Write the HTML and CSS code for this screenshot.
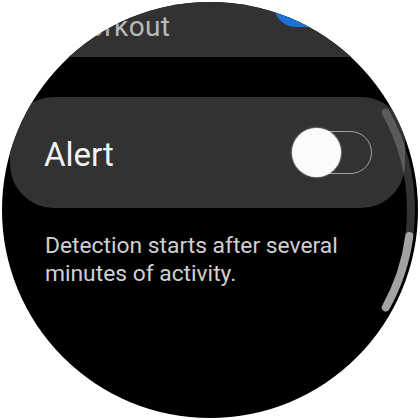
FILE: index.html
```html
<!DOCTYPE html>
<html lang="en">
<head>
<meta charset="utf-8">
<title>Alert</title>
<link rel="stylesheet" href="styles.css">
</head>
<body>
  <div class="watch">
    <div class="list">
      <div class="card card-workout">
        <span class="sub-label">Workout</span>
        <span class="switch switch-on"></span>
      </div>
      <div class="card card-alert">
        <span class="label">Alert</span>
        <span class="switch">
          <span class="knob"></span>
        </span>
      </div>
      <p class="desc">Detection starts after several minutes of activity.</p>
    </div>
    <svg class="scrollbar" width="416" height="416" viewBox="0 0 416 416" aria-hidden="true">
      <path class="scroll-track" d="M383.8 110.6 A201 201 0 0 1 383.8 305.4"/>
      <path class="scroll-thumb" d="M407.3 234 A201 201 0 0 1 383.8 305.4"/>
    </svg>
  </div>
</body>
</html>
```
FILE: styles.css
```css
html, body {
  margin: 0;
  padding: 0;
  background: #ffffff;
}

body {
  width: 420px;
  height: 420px;
  padding: 2px;
  box-sizing: border-box;
  font-family: Roboto, "Noto Sans", sans-serif;
}

/* round watch face */
.watch {
  position: relative;
  width: 416px;
  height: 416px;
  border-radius: 50%;
  overflow: hidden;
  background: #000000;
}

.list {
  display: flex;
  flex-direction: column;
  margin: -48px 13px 0 8px;
}

.card {
  display: flex;
  align-items: center;
  justify-content: space-between;
  background: #323232;
  border-radius: 44px;
  box-sizing: border-box;
}

.card-workout {
  height: 103px;
  padding: 0 52px 0 53px;
}

.card-alert {
  height: 111px;
  margin-top: 40px;
  padding: 0 33px 0 34px;
}

.sub-label {
  align-self: flex-end;
  margin-bottom: 13px;
  color: #b9b9b9;
  font-size: 28px;
  letter-spacing: 0.4px;
  line-height: 34px;
}

.label {
  color: #f3f3f3;
  font-size: 33px;
  line-height: 40px;
  padding-top: 5px;
}

/* toggle switch */
.switch {
  position: relative;
  width: 79px;
  height: 43px;
  border: 1.5px solid #a3a3a3;
  border-radius: 22px;
  box-sizing: border-box;
  flex: none;
}

.switch-on {
  background: #1a72d6;
  border-color: #1a72d6;
}

.knob {
  position: absolute;
  left: -2.5px;
  top: -4.5px;
  width: 49px;
  height: 49px;
  border-radius: 50%;
  background: #fbfbfb;
  box-shadow: 0 0 1.5px 0.5px rgba(255, 255, 255, 0.55);
}

.desc {
  margin: 24px 0 0 35px;
  color: #d0d0d0;
  font-size: 22.8px;
  line-height: 28px;
  width: 330px;
}

/* curved scroll indicator along the bezel */
.scrollbar {
  position: absolute;
  left: 0;
  top: 0;
}

.scroll-track,
.scroll-thumb {
  fill: none;
  stroke-width: 8;
  stroke-linecap: round;
}

.scroll-track {
  stroke: rgba(255, 255, 255, 0.2);
}

.scroll-thumb {
  stroke: #a2a2a2;
}
```
